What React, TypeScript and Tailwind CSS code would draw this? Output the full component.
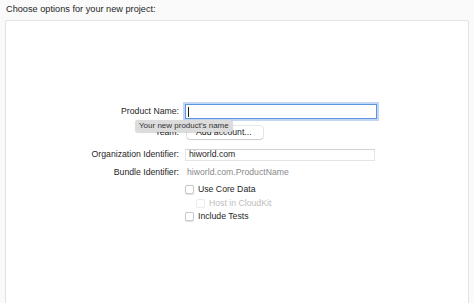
import type { ReactNode } from 'react';

function Row({ label, mt, h, children }: { label?: string; mt: string; h: string; children: ReactNode }) {
  return (
    <div className={`flex items-center ${mt} ${h}`}>
      <div className="w-[179px] shrink-0 pr-[6px] text-right text-[8.7px] text-[#262626]">{label}</div>
      <div className="flex h-full flex-1 items-center">{children}</div>
    </div>
  );
}

function Check({ label, disabled }: { label: string; disabled?: boolean }) {
  return (
    <div className="flex items-center gap-[4px]">
      <div
        className={`h-[9px] w-[9px] rounded-[2px] bg-white ${
          disabled ? 'border border-[#ececec]' : 'border border-[#c9c9c9] shadow-[0_0.5px_1px_rgba(0,0,0,0.12)]'
        }`}
      />
      <span className={`text-[8.7px] ${disabled ? 'text-[#bdbdbd]' : 'text-[#262626]'}`}>{label}</span>
    </div>
  );
}

export default function App() {
  return (
    <div className="relative flex h-[303px] w-[474px] flex-col overflow-hidden bg-[#fafafa] font-['Liberation_Sans',Arial,sans-serif]">
      <div className="h-[20px] shrink-0 pl-[6px] pt-[4px] text-[9.2px] leading-[11px] text-[#262626]">
        Choose options for your new project:
      </div>

      <div className="ml-[5px] h-[300px] w-[464px] shrink-0 rounded-t-[2px] border border-[#e2e2e2] bg-white pt-[83px]">
        <Row label="Product Name:" mt="mt-0" h="h-[15px]">
          <div className="flex h-full w-[192px] items-center border border-[#5f95e0] bg-white pl-[2px] shadow-[0_0_0_2px_rgba(120,165,235,0.45)]">
            <div className="h-[10px] w-[1px] bg-[#222]" />
          </div>
        </Row>

        <Row label="Team:" mt="mt-[7px]" h="h-[13px]">
          <div className="ml-[2px] flex h-full w-[76px] items-center rounded-[3px] bg-white pl-[9px] text-[8.7px] text-[#262626] shadow-[0_0_0_0.5px_rgba(0,0,0,0.18),0_1px_1px_rgba(0,0,0,0.12)]">
            Add account...
          </div>
        </Row>

        <Row label="Organization Identifier:" mt="mt-[10px]" h="h-[12px]">
          <div className="flex h-full w-[190px] items-center border border-[#e4e4e4] border-t-[#d2d2d2] bg-white pl-[3px] text-[8.7px] text-[#1f1f1f]">
            hiworld.com
          </div>
        </Row>

        <Row label="Bundle Identifier:" mt="mt-[5px]" h="h-[14px]">
          <span className="pl-[2px] text-[8.7px] text-[#8a8a8a]">hiworld.com.ProductName</span>
        </Row>

        <Row mt="mt-[4px]" h="h-[11px]">
          <Check label="Use Core Data" />
        </Row>
        <Row mt="mt-[3px]" h="h-[11px]">
          <div className="pl-[11px]">
            <Check label="Host in CloudKit" disabled />
          </div>
        </Row>
        <Row mt="mt-[2px]" h="h-[11px]">
          <Check label="Include Tests" />
        </Row>
      </div>

      {/* tooltip over the Team row */}
      <div className="absolute left-[135px] top-[120px] flex h-[12px] w-[98px] items-center whitespace-nowrap rounded-[3px] bg-[#dcdcdc] pl-[4px] text-[8px] text-[#333] shadow-[0_0.5px_1px_rgba(0,0,0,0.15)]">
        Your new product's name
      </div>
    </div>
  );
}
